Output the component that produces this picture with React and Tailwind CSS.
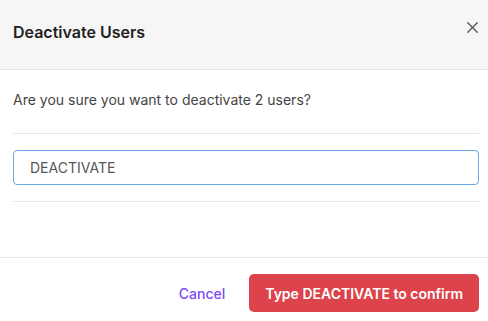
import { X } from "lucide-react";

export default function App() {
  return (
    <div className="w-[488px] h-[321px] bg-white flex flex-col font-['Inter',sans-serif]">
      <div className="h-[70px] bg-[#f6f6f6] border-b border-[#e4e4e4] flex items-start justify-between pl-[13px] pr-[6px] pt-[20px]">
        <h2 className="text-[16px] font-semibold text-[#1f1f1f] leading-[24px]">Deactivate Users</h2>
        <button className="text-[#555] mt-[-2px]">
          <X size={19} strokeWidth={1.7} />
        </button>
      </div>

      <div className="flex-1 pl-[13px] pr-[9px] pt-[20px]">
        <p className="text-[14px] text-[#444] leading-[20px]">Are you sure you want to deactivate 2 users?</p>
        <div className="mt-[23px] border-t border-[#e6e6e6]" />
        <input
          type="text"
          defaultValue="DEACTIVATE"
          className="mt-[16px] w-full h-[35px] px-[16px] text-[14px] text-[#555] border border-[#6aa8ea] rounded-[4px] outline-none"
        />
        <div className="mt-[16px] border-t border-[#e6e6e6]" />
      </div>

      <div className="h-[64px] border-t border-[#e6e6e6] flex items-start justify-end gap-[24px] px-[9px] pt-[16px]">
        <button className="h-[38px] text-[14px] text-[#7b4ef5] font-medium">Cancel</button>
        <button className="h-[38px] px-[16px] bg-[#dc434b] text-white text-[14px] font-semibold rounded-[5px]">
          Type DEACTIVATE to confirm
        </button>
      </div>
    </div>
  );
}
